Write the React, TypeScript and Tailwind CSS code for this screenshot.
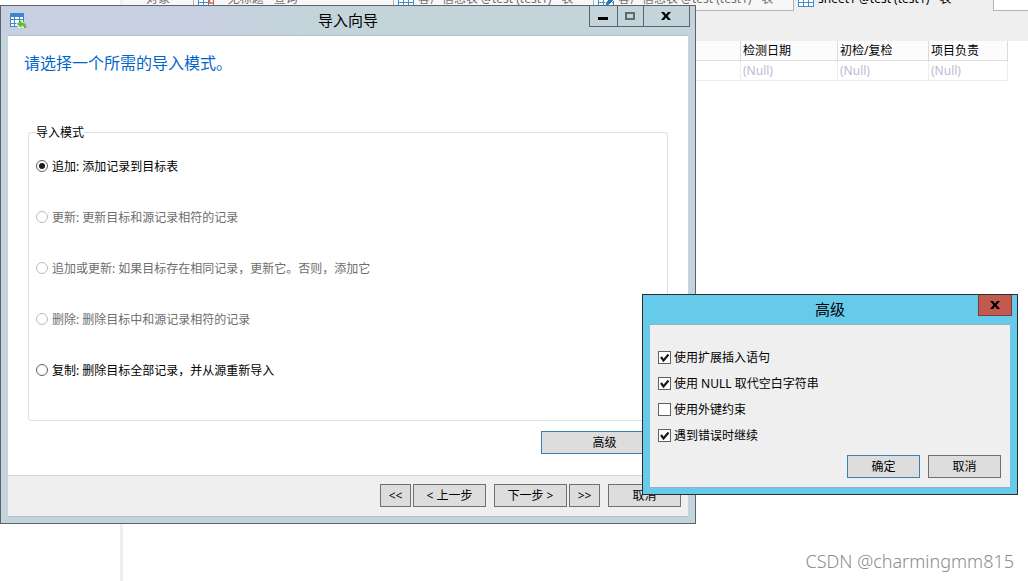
import { useState, type ReactNode } from "react";
import clsx from "clsx";

const MODES = [
    { id: "append", label: "追加: 添加记录到目标表", disabled: false },
    { id: "update", label: "更新: 更新目标和源记录相符的记录", disabled: true },
    { id: "upsert", label: "追加或更新: 如果目标存在相同记录，更新它。否则，添加它", disabled: true },
    { id: "delete", label: "删除: 删除目标中和源记录相符的记录", disabled: true },
    { id: "copy", label: "复制: 删除目标全部记录，并从源重新导入", disabled: false },
];

const OPTIONS = [
    { id: "extended", label: "使用扩展插入语句", checked: true },
    { id: "null", label: "使用 NULL 取代空白字符串", checked: true },
    { id: "fk", label: "使用外键约束", checked: false },
    { id: "continue", label: "遇到错误时继续", checked: true },
];

const TABS = [
    { title: "* 无标题 - 查询", icon: "query" },
    { title: "客户信息表 @test (test1) - 表", icon: "table" },
    { title: "客户信息表 @test (test1) - 表", icon: "design" },
    { title: "sheet1 @test (test1) - 表", icon: "table", active: true },
];

function TableIcon({ kind }: { kind: string }) {
    return (
        <svg width="16" height="16" viewBox="0 0 16 16" className="shrink-0" aria-hidden="true">
            <path d="M0 0h16v16H0z" fill="#3d8fcf" />
            <path
                d="M1 5h4v2H1zM6 5h4v2H6zM11 5h4v2h-4zM1 8h4v3H1zM6 8h4v3H6zM11 8h4v3h-4zM1 12h4v3H1zM6 12h4v3H6zM11 12h4v3h-4z"
                fill="#fff"
            />
            {kind === "query" && <path d="M11.500 8h4v4h-4z" fill="#fff" stroke="#e0633a" strokeWidth="1.500" />}
            {kind === "design" && <path d="M7 15l1-4 6-6 3 3-6 6z" fill="#2477b8" stroke="#fff" />}
        </svg>
    );
}

function ImportIcon() {
    return (
        <svg width="17" height="16" viewBox="0 0 17 16" className="shrink-0" aria-hidden="true">
            <path d="M0 1Q0 0 1 0h12q1 0 1 1v13H0z" fill="#3b87c8" />
            <path d="M1 4h3v2H1zM5 4h4v2H5zM10 4h3v2h-3zM1 7h3v3H1zM5 7h4v3H5zM10 7h3v3h-3zM1 11h3v2H1zM5 11h4v2H5zM10 11h3v2h-3z" fill="#fff" />
            <path d="M6 9h8v6H8z" fill="#e3edf0" />
            <path d="M7 11l4.500-4v2.500Q16.500 9.500 16.500 15H14q0-2.500-2.500-2.500V15z" fill="#62bd2e" />
        </svg>
    );
}

function CloseGlyph() {
    return (
        <svg width="10" height="8" viewBox="0 0 10 8" aria-hidden="true">
            <path d="M0 0h3l2 2.500L7 0h3L6.600 4 10 8H7L5 5.500 3 8H0l3.400-4z" fill="#000" />
        </svg>
    );
}

interface PushButtonProps {
    children: ReactNode;
    className?: string;
    focused?: boolean;
    onClick?: () => void;
}

function PushButton({ children, className, focused, onClick }: PushButtonProps) {
    return (
        <button
            type="button"
            onClick={onClick}
            className={clsx(
                "h-[23px] border bg-[#dddddd] text-center leading-[21px] whitespace-pre",
                focused ? "border-[#3c7fb1]" : "border-[#707070]",
                className
            )}
        >
            {children}
        </button>
    );
}

/** Object tabs and the record grid behind the dialogs. */
function Workspace() {
    return (
        <div className="flex min-h-screen">
            <div className="w-[120px] shrink-0" />
            <div className="w-[3px] shrink-0 bg-[#efefef]" />
            <main className="min-w-0 flex-1">
                <div className="flex h-[11px] items-end overflow-hidden bg-white text-[#707070]">
                    <button type="button" className="h-6 w-[71px] shrink-0 border-r border-b border-[#b4b4b4] bg-[#f7f7f7]">
                        对象
                    </button>
                    {TABS.map((tab, i) => (
                        <button
                            key={i}
                            type="button"
                            className={clsx(
                                "flex h-6 w-[200px] shrink-0 items-center gap-1 border-r border-[#b4b4b4] pl-1 text-left whitespace-nowrap",
                                tab.active ? "bg-[#efefef] text-black" : "border-b bg-[#f7f7f7]"
                            )}
                        >
                            <TableIcon kind={tab.icon} />
                            {tab.title}
                        </button>
                    ))}
                    <div className="h-6 flex-1 border-b border-[#b4b4b4]" />
                </div>
                <div className="h-[30px] bg-[#efefef]" />
                <div className="pr-5">
                    <table className="w-full table-fixed border-collapse text-left">
                        <thead>
                            <tr className="h-[19px] border-b border-[#dcdcdc] bg-[#fcfcfc]">
                                <th className="border-r border-[#dcdcdc]" />
                                <th className="w-[97px] border-r border-[#dcdcdc] px-[2px] pt-[2px] pb-0 leading-4 font-normal">检测日期</th>
                                <th className="w-[91px] border-r border-[#dcdcdc] px-[2px] pt-[2px] pb-0 leading-4 font-normal">初检/复检</th>
                                <th className="w-[79px] border-r border-[#dcdcdc] px-[2px] pt-[2px] pb-0 leading-4 font-normal">项目负责</th>
                            </tr>
                        </thead>
                        <tbody>
                            <tr className="h-5 border-b border-[#ededed] text-[#b9bbd6]">
                                <td className="border-r border-[#ededed]" />
                                <td className="border-r border-[#ededed] px-[2px] pt-[2px] pb-0 leading-4">(Null)</td>
                                <td className="border-r border-[#ededed] px-[2px] pt-[2px] pb-0 leading-4">(Null)</td>
                                <td className="border-r border-[#ededed] px-[2px] pt-[2px] pb-0 leading-4">(Null)</td>
                            </tr>
                        </tbody>
                    </table>
                </div>
            </main>
        </div>
    );
}

function ImportWizard() {
    const [mode, setMode] = useState("append");

    return (
        <section className="absolute top-[5px] left-0 flex w-[696px] flex-col border border-[#5f6270] bg-[#c3d5db] px-[7px] pb-[6px]">
            <header className="-mx-[7px] grid h-[29px] grid-cols-3 bg-linear-to-r from-[#c7d0e0] from-30% to-[#c3d5db] to-45%">
                <div className="flex items-center pl-[9px]">
                    <ImportIcon />
                </div>
                <h1 className="text-center text-[15px] leading-7">导入向导</h1>
                <div className="flex justify-end pr-[5px]">
                    <div className="flex h-[21px] divide-x divide-[#5f6270] border-x border-b border-[#5f6270]">
                        <button type="button" aria-label="最小化" className="flex w-7 items-center justify-center pt-1">
                            <svg width="10" height="3" aria-hidden="true">
                                <path d="M0 0h10v3H0z" />
                            </svg>
                        </button>
                        <button type="button" aria-label="最大化" className="flex w-[26px] items-center justify-center">
                            <svg width="10" height="8" aria-hidden="true">
                                <path d="M1 1h8v6H1z" fill="none" stroke="#5e6b6d" strokeWidth="2" />
                            </svg>
                        </button>
                        <button type="button" aria-label="关闭" className="flex w-[45px] items-center justify-center">
                            <CloseGlyph />
                        </button>
                    </div>
                </div>
            </header>

            <div className="border-y border-[#b3bec8] bg-white">
                <div className="px-5 pb-[21px]">
                    <h2 className="-ml-1 pt-[15px] text-[16px] leading-6 text-[#0066cc]">请选择一个所需的导入模式。</h2>
                    <fieldset className="mt-[47px] mb-[10px] rounded-[3px] border border-[#d5dfe5] px-[7px] pb-10">
                        <legend className="pt-[2px] leading-[18px]">导入模式</legend>
                        <div className="flex flex-col gap-[33px] pt-4">
                            {MODES.map((m) => (
                                <label
                                    key={m.id}
                                    className={clsx("flex h-[18px] items-center gap-1", m.disabled ? "text-[#6d6d6d]" : "text-black")}
                                >
                                    <input
                                        type="radio"
                                        name="import-mode"
                                        checked={mode === m.id}
                                        disabled={m.disabled}
                                        onChange={() => setMode(m.id)}
                                        className="mb-[2px] grid size-3 appearance-none place-items-center rounded-full border border-[#606060] bg-white before:size-[6px] before:rounded-full checked:before:bg-[#1c1c1c] disabled:border-[#bcbcbc]"
                                    />
                                    {m.label}
                                </label>
                            ))}
                        </div>
                    </fieldset>
                    <div className="flex justify-end">
                        <PushButton className="w-[127px]" focused>
                            高级
                        </PushButton>
                    </div>
                </div>
                <footer className="flex h-[41px] items-center justify-end gap-2 border-t border-[#d3d3d3] bg-[#efefef] pr-[7px] pb-px">
                    <div className="flex gap-[2px]">
                        <PushButton className="w-[31px]">&lt;&lt;</PushButton>
                        <PushButton className="w-[73px]">&lt; 上一步</PushButton>
                    </div>
                    <div className="flex gap-[2px]">
                        <PushButton className="w-[73px]">下一步 &gt;</PushButton>
                        <PushButton className="w-[31px]">&gt;&gt;</PushButton>
                    </div>
                    <PushButton className="w-[73px]">取消</PushButton>
                </footer>
            </div>
        </section>
    );
}

function AdvancedDialog() {
    const [options, setOptions] = useState(OPTIONS);

    const toggle = (id: string) => {
        setOptions((prev) => prev.map((o) => (o.id === id ? { ...o, checked: !o.checked } : o)));
    };

    return (
        <section className="absolute top-[294px] left-[642px] w-[376px] border border-[#2d2d2d] bg-[#66caea] px-[7px] pb-[6px]">
            <header className="-mx-[7px] grid h-[29px] grid-cols-3">
                <h2 className="col-start-2 text-center text-[15px] leading-7">高级</h2>
                <div className="flex justify-end pr-[5px]">
                    <button
                        type="button"
                        aria-label="关闭"
                        className="flex h-[21px] w-[34px] items-center justify-center border-x border-b border-[#7b3a3c] bg-[#c35a50]"
                    >
                        <CloseGlyph />
                    </button>
                </div>
            </header>
            <div className="border-y border-[#8fb3c4] bg-[#efefef] pt-6 pr-[9px] pb-[9px] pl-2">
                <div className="flex flex-col gap-2">
                    {options.map((o) => (
                        <label key={o.id} className="flex h-[18px] items-center gap-[3px]">
                            <span className="mb-px grid">
                                <input
                                    type="checkbox"
                                    checked={o.checked}
                                    onChange={() => toggle(o.id)}
                                    className="peer col-start-1 row-start-1 size-[13px] appearance-none border border-[#606060] bg-white"
                                />
                                <svg
                                    width="13"
                                    height="13"
                                    className="pointer-events-none invisible col-start-1 row-start-1 peer-checked:visible"
                                    aria-hidden="true"
                                >
                                    <path d="M3 6l2.500 3.500L10.500 3.500" fill="none" stroke="#1a1a1a" strokeWidth="2.200" />
                                </svg>
                            </span>
                            {o.label}
                        </label>
                    ))}
                </div>
                <div className="mt-[10px] flex justify-end gap-2">
                    <PushButton className="w-[73px]" focused>
                        确定
                    </PushButton>
                    <PushButton className="w-[73px]">取消</PushButton>
                </div>
            </div>
        </section>
    );
}

export default function App() {
    return (
        <div className="relative min-h-screen overflow-hidden bg-white font-['Noto_Sans','Noto_Sans_CJK_SC',sans-serif] text-xs text-black">
            <Workspace />
            <ImportWizard />
            <AdvancedDialog />
            <p className="absolute right-[14px] bottom-2 text-[18px] leading-6 font-light text-[#8c8c8c]">CSDN @charmingmm815</p>
        </div>
    );
}
